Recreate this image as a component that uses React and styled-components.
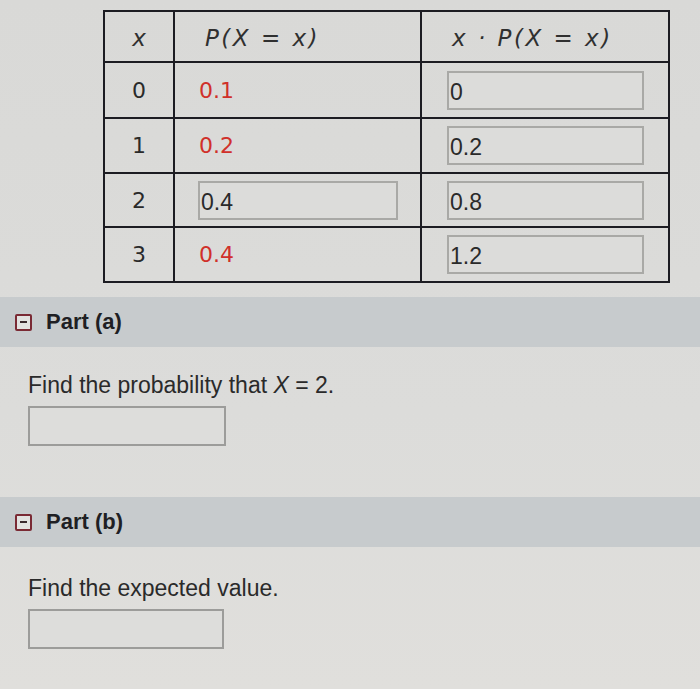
import React from "react";
import styled, { createGlobalStyle } from "styled-components";

const Global = createGlobalStyle`
  html, body { margin: 0; padding: 0; }
  body {
    background: #dbdbd9;
    font-family: "Liberation Sans", Arial, sans-serif;
    color: #1e1e1e;
  }
`;

const Page = styled.div`
  width: 700px;
  height: 689px;
  overflow: hidden;
  background: linear-gradient(180deg, #d9d9d7 0%, #dcdcda 60%, #e0dfdc 100%);
  padding-top: 10px;
  box-sizing: border-box;
`;

const Table = styled.table`
  margin-left: 103px;
  width: 565px;
  table-layout: fixed;
  border-collapse: collapse;
  border: 2px solid #1c1c22;
  font-family: "DejaVu Sans", Verdana, sans-serif;
`;

const Col = styled.col`
  width: ${(p) => p.$w}px;
`;

const Th = styled.th`
  border: 2px solid #1c1c22;
  height: 46px;
  font-weight: normal;
  font-style: italic;
  font-size: 23px;
  color: #303030;
  text-align: ${(p) => (p.$center ? "center" : "left")};
  padding: 3px 0 0 ${(p) => p.$pl || 0}px;
  font-family: "DejaVu Sans", sans-serif;
  letter-spacing: ${(p) => (p.$center ? 0 : 2.5)}px;
  white-space: nowrap;
`;

const Td = styled.td`
  border: 2px solid #1c1c22;
  height: ${(p) => p.$h}px;
  padding: 0 0 0 ${(p) => p.$pl || 0}px;
  text-align: ${(p) => (p.$center ? "center" : "left")};
  font-size: 22px;
  color: ${(p) => (p.$red ? "#d0302a" : "#2a2a2a")};
  vertical-align: middle;
`;

const CellInput = styled.div`
  box-sizing: border-box;
  width: ${(p) => p.$w}px;
  height: 39px;
  border: 2px solid #a9a9a6;
  background: #dcdcda;
  font-family: "Liberation Sans", Arial, sans-serif;
  font-size: 23px;
  color: #2a2a2a;
  display: flex;
  align-items: center;
  padding-left: 1px;
  padding-top: 4px;
`;

const PartBar = styled.div`
  margin-top: ${(p) => p.$mt}px;
  height: 50px;
  background: #c7cbcd;
  display: flex;
  align-items: center;
  padding-left: 15px;
  gap: 14px;
`;

const Toggle = styled.span`
  box-sizing: border-box;
  width: 17px;
  height: 17px;
  border: 2px solid #7a2a34;
  border-radius: 2px;
  display: flex;
  align-items: center;
  justify-content: center;
  background: #e2e2e0;
  &::after {
    content: "";
    width: 7px;
    height: 2px;
    background: #3a2a2e;
  }
`;

const PartTitle = styled.span`
  font-weight: bold;
  font-size: 22px;
  color: #1f1f24;
  font-family: "Liberation Sans", Arial, sans-serif;
`;

const Question = styled.div`
  padding-left: 28px;
  margin-top: ${(p) => p.$mt}px;
  font-size: 23px;
  color: #2a2a2a;
`;

const AnswerBox = styled.div`
  box-sizing: border-box;
  margin-left: 28px;
  margin-top: 7px;
  width: ${(p) => p.$w}px;
  height: 40px;
  border: 2px solid #9c9c9a;
  background: #dddddb;
`;

const rows = [
  { x: "0", p: "0.1", pInput: false, xp: "0", h: 54 },
  { x: "1", p: "0.2", pInput: false, xp: "0.2", h: 53 },
  { x: "2", p: "0.4", pInput: true, xp: "0.8", h: 52 },
  { x: "3", p: "0.4", pInput: false, xp: "1.2", h: 53 },
];

export default function App() {
  return (
    <Page>
      <Global />
      <Table>
        <colgroup>
          <Col $w={70} />
          <Col $w={247} />
          <Col $w={248} />
        </colgroup>
        <thead>
          <tr>
            <Th $center>x</Th>
            <Th $pl={30}>P(X = x)</Th>
            <Th $pl={30}>x · P(X = x)</Th>
          </tr>
        </thead>
        <tbody>
          {rows.map((r) => (
            <tr key={r.x}>
              <Td $center $h={r.h}>{r.x}</Td>
              {r.pInput ? (
                <Td $h={r.h} $pl={23}>
                  <CellInput $w={200}>{r.p}</CellInput>
                </Td>
              ) : (
                <Td $h={r.h} $pl={24} $red>{r.p}</Td>
              )}
              <Td $h={r.h} $pl={25}>
                <CellInput $w={197}>{r.xp}</CellInput>
              </Td>
            </tr>
          ))}
        </tbody>
      </Table>

      <PartBar $mt={14}>
        <Toggle />
        <PartTitle>Part (a)</PartTitle>
      </PartBar>
      <Question $mt={25}>
        Find the probability that <i>X</i> = 2.
      </Question>
      <AnswerBox $w={198} />

      <PartBar $mt={51}>
        <Toggle />
        <PartTitle>Part (b)</PartTitle>
      </PartBar>
      <Question $mt={28}>Find the expected value.</Question>
      <AnswerBox $w={196} />
    </Page>
  );
}
